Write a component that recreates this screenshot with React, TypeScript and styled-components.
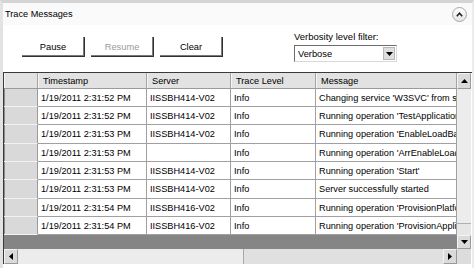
import React from "react";
import styled, { createGlobalStyle } from "styled-components";

const Global = createGlobalStyle`
  html, body { margin: 0; padding: 0; background: #ffffff; }
  * { box-sizing: border-box; }
  body { font-family: "Liberation Sans", Arial, sans-serif; font-size: 9.2px; color: #000; }
`;

const Panel = styled.div`
  width: 474px;
  height: 268px;
  border-top: 3px solid #d4d4d4;
  border-left: 3px solid #e2e2e2;
  border-right: 2px solid #ececec;
  display: flex;
  flex-direction: column;
  background: #ffffff;
  overflow: hidden;
`;

const TitleBar = styled.div`
  height: 22px;
  display: flex;
  align-items: center;
  justify-content: space-between;
  padding: 0 5px 0 2px;
  background: #fafafa;
  font-size: 9.2px;
  color: #000;
`;

const CollapseButton = styled.div`
  width: 15px;
  height: 15px;
  border-radius: 50%;
  border: 1px solid #a8a8a8;
  background: linear-gradient(#ffffff, #e4e4e4);
  display: flex;
  align-items: center;
  justify-content: center;
`;

const Toolbar = styled.div`
  height: 47px;
  display: flex;
  align-items: flex-start;
`;

const ButtonGroup = styled.div`
  display: flex;
  gap: 6px;
  margin: 12px 0 0 19px;
`;

const Button = styled.div<{ $disabled?: boolean }>`
  width: 63px;
  height: 20px;
  display: flex;
  align-items: center;
  justify-content: center;
  background: #ffffff;
  border-right: 1px solid #303030;
  border-bottom: 1px solid #303030;
  box-shadow: inset -1px -1px 0 #7a7a7a;
  color: ${(p) => (p.$disabled ? "#9a9a9a" : "#000")};
  font-size: 9.3px;
`;

const Filter = styled.div`
  display: flex;
  flex-direction: column;
  gap: 3px;
  margin: 6px 0 0 71px;
`;

const FilterLabel = styled.div`
  font-size: 9.5px;
  height: 11px;
  line-height: 11px;
  color: #000;
`;

const Select = styled.div`
  width: 103px;
  height: 17px;
  display: flex;
  align-items: center;
  justify-content: space-between;
  border: 1px solid #6d6d6d;
  border-right-color: #d8d8d8;
  border-bottom-color: #d8d8d8;
  background: #fff;
  padding: 0 1px 0 3px;
  font-size: 9.3px;
`;

const SelectArrow = styled.div`
  width: 12px;
  height: 13px;
  background: #dedede;
  border: 1px solid #b8b8b8;
  display: flex;
  align-items: center;
  justify-content: center;
`;

const Grid = styled.div`
  display: flex;
  flex-direction: column;
  border-top: 1px solid #3a3a3a;
  border-left: 1px solid #3a3a3a;
  width: 469px;
`;

const GridMain = styled.div`
  display: flex;
`;

const Body = styled.div`
  width: 453px;
  display: flex;
  flex-direction: column;
`;

const cols = "34px 109px 84px 85px 141px";

const HeaderRow = styled.div`
  display: grid;
  grid-template-columns: ${cols};
  height: 16px;
  background: #e2e2e2;
  border-bottom: 1px solid #9a9a9a;
`;

const HeaderCell = styled.div`
  display: flex;
  align-items: center;
  padding-left: 5px;
  border-right: 1px solid #a4a4a4;
  box-shadow: inset 1px 0 0 #f6f6f6;
  white-space: nowrap;
  overflow: hidden;
  color: #000;
`;

const Row = styled.div<{ $h: number }>`
  display: grid;
  grid-template-columns: ${cols};
  height: ${(p) => p.$h}px;
`;

const RowHead = styled.div`
  background: #d9d9d9;
  border-right: 1px solid #9a9a9a;
  border-bottom: 1px solid #f2f2f2;
  box-shadow: inset 1px 0 0 #8a8a8a;
`;

const Cell = styled.div`
  display: flex;
  align-items: center;
  padding-left: 3px;
  background: #fff;
  border-right: 1px solid #a0a0a0;
  border-bottom: 1px solid #a0a0a0;
  white-space: nowrap;
  overflow: hidden;
  color: #000;
`;

const Filler = styled.div`
  height: 14px;
  background: #858585;
`;

const VScroll = styled.div`
  width: 14px;
  display: flex;
  flex-direction: column;
  background: #e6e6e6;
`;

const ArrowBox = styled.div<{ $h?: number }>`
  width: 14px;
  height: ${(p) => p.$h ?? 15}px;
  background: #dadada;
  border: 1px solid #f4f4f4;
  border-right-color: #9a9a9a;
  border-bottom-color: #9a9a9a;
  display: flex;
  align-items: center;
  justify-content: center;
  flex-shrink: 0;
`;

const VThumb = styled.div`
  flex: 1;
  margin-bottom: 11px;
  background: #ececec;
  border-bottom: 1px solid #b0b0b0;
`;

const HScrollRow = styled.div`
  display: flex;
  height: 15px;
`;

const HScroll = styled.div`
  width: 453px;
  display: flex;
  background: #e6e6e6;
`;

const HThumb = styled.div`
  width: 226px;
  background: #ececec;
  border-right: 1px solid #a8a8a8;
`;

const HTrack = styled.div`
  flex: 1;
  background: #e0e0e0;
`;

const Corner = styled.div`
  width: 14px;
  background: #dcdcdc;
`;

const Tri = ({ dir }: { dir: "up" | "down" | "left" | "right" }) => {
  const pts = {
    up: "0,4 7,4 3.5,0",
    down: "0,0 7,0 3.5,4",
    left: "4,0 4,7 0,3.5",
    right: "0,0 0,7 4,3.5",
  }[dir];
  const w = dir === "up" || dir === "down" ? 7 : 4;
  const h = dir === "up" || dir === "down" ? 4 : 7;
  return (
    <svg width={w} height={h} viewBox={`0 0 ${w} ${h}`}>
      <polygon points={pts} fill="#000" />
    </svg>
  );
};

const rows: [string, string, string, string][] = [
  ["1/19/2011 2:31:52 PM", "IISSBH414-V02", "Info", "Changing service 'W3SVC' from state 'Stopped' to 'Started'"],
  ["1/19/2011 2:31:52 PM", "IISSBH414-V02", "Info", "Running operation 'TestApplicationRequestRouting'"],
  ["1/19/2011 2:31:53 PM", "IISSBH414-V02", "Info", "Running operation 'EnableLoadBalancing'"],
  ["1/19/2011 2:31:53 PM", "", "Info", "Running operation 'ArrEnableLoadBalancing'"],
  ["1/19/2011 2:31:53 PM", "IISSBH414-V02", "Info", "Running operation 'Start'"],
  ["1/19/2011 2:31:53 PM", "IISSBH414-V02", "Info", "Server successfully started"],
  ["1/19/2011 2:31:54 PM", "IISSBH416-V02", "Info", "Running operation 'ProvisionPlatform'"],
  ["1/19/2011 2:31:54 PM", "IISSBH416-V02", "Info", "Running operation 'ProvisionApplications'"],
];
const heights = [18, 18, 19, 18, 18, 19, 18, 18];

export default function App() {
  return (
    <>
      <Global />
      <Panel>
        <TitleBar>
          <span>Trace Messages</span>
          <CollapseButton>
            <svg width="7" height="5" viewBox="0 0 7 5">
              <polyline points="0.8,4.2 3.5,1.2 6.2,4.2" fill="none" stroke="#222" strokeWidth="1.6" />
            </svg>
          </CollapseButton>
        </TitleBar>
        <Toolbar>
          <ButtonGroup>
            <Button>Pause</Button>
            <Button $disabled>Resume</Button>
            <Button>Clear</Button>
          </ButtonGroup>
          <Filter>
            <FilterLabel>Verbosity level filter:</FilterLabel>
            <Select>
              <span>Verbose</span>
              <SelectArrow>
                <Tri dir="down" />
              </SelectArrow>
            </Select>
          </Filter>
        </Toolbar>
        <Grid>
          <GridMain>
            <Body>
              <HeaderRow>
                <HeaderCell />
                <HeaderCell>Timestamp</HeaderCell>
                <HeaderCell>Server</HeaderCell>
                <HeaderCell>Trace Level</HeaderCell>
                <HeaderCell>Message</HeaderCell>
              </HeaderRow>
              {rows.map((r, i) => (
                <Row key={i} $h={heights[i]}>
                  <RowHead />
                  <Cell>{r[0]}</Cell>
                  <Cell>{r[1]}</Cell>
                  <Cell>{r[2]}</Cell>
                  <Cell>{r[3]}</Cell>
                </Row>
              ))}
              <Filler />
            </Body>
            <VScroll>
              <ArrowBox $h={16}>
                <Tri dir="up" />
              </ArrowBox>
              <VThumb />
              <ArrowBox $h={14}>
                <Tri dir="down" />
              </ArrowBox>
            </VScroll>
          </GridMain>
          <HScrollRow>
            <HScroll>
              <ArrowBox>
                <Tri dir="left" />
              </ArrowBox>
              <HThumb />
              <HTrack />
              <ArrowBox>
                <Tri dir="right" />
              </ArrowBox>
            </HScroll>
            <Corner />
          </HScrollRow>
        </Grid>
      </Panel>
    </>
  );
}
